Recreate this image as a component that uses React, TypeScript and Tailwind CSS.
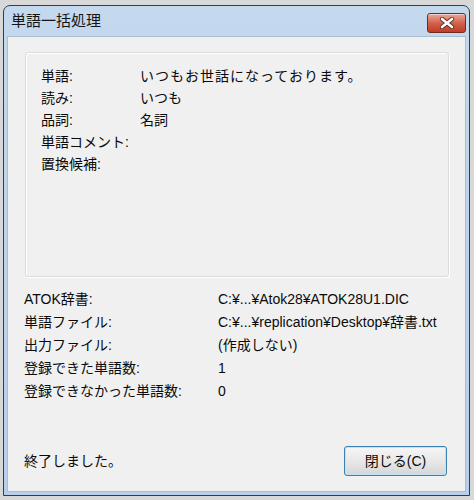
import React from "react";

const font = {
  fontFamily: '"Liberation Sans", "Noto Sans CJK JP", sans-serif',
};

const topRows: [string, string][] = [
  ["単語:", "いつもお世話になっております。"],
  ["読み:", "いつも"],
  ["品詞:", "名詞"],
  ["単語コメント:", ""],
  ["置換候補:", ""],
];

const resultRows: [string, string][] = [
  ["ATOK辞書:", "C:¥...¥Atok28¥ATOK28U1.DIC"],
  ["単語ファイル:", "C:¥...¥replication¥Desktop¥辞書.txt"],
  ["出力ファイル:", "(作成しない)"],
  ["登録できた単語数:", "1"],
  ["登録できなかった単語数:", "0"],
];

const CloseButton = () => (
  <div className="mt-[7px] mr-[3px] w-[39px] h-[20px] rounded-[3px] border border-[#6e2b22] bg-gradient-to-b from-[#e9a99b] via-[#d2624c] to-[#c23b24] flex items-center justify-center shadow-[inset_0_1px_0_rgba(255,255,255,0.5)]">
    <svg width="16" height="12" viewBox="0 0 16 12">
      <path d="M3 2 L13 10 M13 2 L3 10" stroke="#5a2a22" strokeWidth="4.2" strokeLinecap="round" />
      <path d="M3 2 L13 10 M13 2 L3 10" stroke="#ffffff" strokeWidth="2.6" strokeLinecap="round" />
    </svg>
  </div>
);

export default function App() {
  return (
    <div className="w-[474px] h-[500px] bg-[#d8d8d8] pt-[5px] pl-[3px] overflow-hidden text-[#0a0a0a]" style={font}>
      <div className="w-[467px] h-[491px] border border-[#2f3d4d] rounded-t-[7px] bg-gradient-to-b from-[#c4d8ee] to-[#b7cfea] flex flex-col">
        {/* title bar */}
        <div className="h-[30px] flex items-start justify-between">
          <span className="pl-[7px] pt-[5px] text-[15px] leading-[20px] text-[#141414]">単語一括処理</span>
          <CloseButton />
        </div>

        {/* client area */}
        <div className="flex-1 mx-[3px] mb-[3px] bg-[#f0f0f0] border border-[#a9bdd3] flex flex-col px-[16px] text-[14px]">
          <div className="mt-[15px] ml-[1px] w-[424px] h-[225px] rounded-[3px] border border-[#dadcdf] shadow-[inset_1px_1px_0_#ffffff,1px_1px_0_#ffffff] pt-[12px] pl-[15px]">
            {topRows.map(([label, value], i) => (
              <div key={label} className="flex h-[22px] items-center">
                <span className="w-[99px] shrink-0">{label}</span>
                <span className={i === 0 ? "tracking-[1px]" : ""}>{value}</span>
              </div>
            ))}
          </div>

          <div className="mt-[11px] flex flex-col">
            {resultRows.map(([label, value]) => (
              <div key={label} className="flex h-[23px] items-center">
                <span className="w-[194px] shrink-0">{label}</span>
                <span>{value}</span>
              </div>
            ))}
          </div>

          <div className="mt-auto mb-[15px] flex items-center justify-between">
            <span>終了しました。</span>
            <button className="w-[103px] h-[30px] mr-[2px] rounded-[3px] border border-[#3c7fb1] bg-gradient-to-b from-[#f6f6f6] via-[#e8e8e8] to-[#d6d6d6] shadow-[inset_0_0_0_1px_#bfe3f8] text-[14px] text-[#0a0a0a]">
              閉じる(C)
            </button>
          </div>
        </div>
      </div>
    </div>
  );
}
